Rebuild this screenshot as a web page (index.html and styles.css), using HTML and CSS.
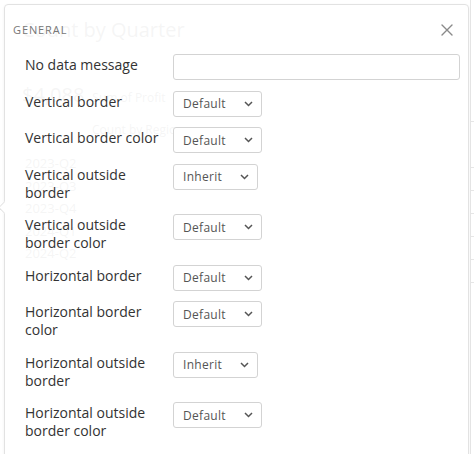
FILE: index.html
```html
<!DOCTYPE html>
<html lang="en">
<head>
<meta charset="utf-8">
<title>Table settings</title>
<link rel="stylesheet" href="styles.css">
</head>
<body>
<div class="dashboard">
  <section class="chart">
    <h2 class="chart-title">Count by Quarter</h2>
    <div class="kpi"><span class="kpi-value">$4,088</span><span class="kpi-label">Sum of Profit</span></div>
    <div class="kpi-sub">Count by Region</div>
    <ul class="quarters">
      <li>2023-Q2</li>
      <li>2023-Q3</li>
      <li>2023-Q4</li>
      <li>2024-Q1</li>
      <li>2024-Q2</li>
    </ul>
  </section>
  <aside class="table">
    <div class="table-head"></div>
    <div class="table-row tall"></div>
    <div class="table-row"></div>
    <div class="table-row"></div>
    <div class="table-row"></div>
    <div class="table-row"></div>
    <div class="table-row"></div>
    <div class="table-row last"></div>
  </aside>
</div>

<div class="popover">
  <header class="pop-head">
    <span class="pop-title">GENERAL</span>
    <button class="close" type="button" aria-label="Close">
      <svg width="12" height="12" viewBox="0 0 12 12"><path d="M1 1 L11 11 M11 1 L1 11" stroke="#8a8a8a" stroke-width="1.4" fill="none" stroke-linecap="round"/></svg>
    </button>
  </header>
  <div class="form">
    <span class="field-label">No data message</span>
    <input class="text-input" type="text">

    <span class="field-label">Vertical border</span>
    <div class="select"><span>Default</span><svg class="chev" width="9" height="6" viewBox="0 0 9 6"><path d="M1 1 L4.5 4.5 L8 1" stroke="#555" stroke-width="1.5" fill="none"/></svg></div>

    <span class="field-label">Vertical border color</span>
    <div class="select"><span>Default</span><svg class="chev" width="9" height="6" viewBox="0 0 9 6"><path d="M1 1 L4.5 4.5 L8 1" stroke="#555" stroke-width="1.5" fill="none"/></svg></div>

    <span class="field-label">Vertical outside border</span>
    <div class="select"><span>Inherit</span><svg class="chev" width="9" height="6" viewBox="0 0 9 6"><path d="M1 1 L4.5 4.5 L8 1" stroke="#555" stroke-width="1.5" fill="none"/></svg></div>

    <span class="field-label">Vertical outside border color</span>
    <div class="select"><span>Default</span><svg class="chev" width="9" height="6" viewBox="0 0 9 6"><path d="M1 1 L4.5 4.5 L8 1" stroke="#555" stroke-width="1.5" fill="none"/></svg></div>

    <span class="field-label">Horizontal border</span>
    <div class="select"><span>Default</span><svg class="chev" width="9" height="6" viewBox="0 0 9 6"><path d="M1 1 L4.5 4.5 L8 1" stroke="#555" stroke-width="1.5" fill="none"/></svg></div>

    <span class="field-label">Horizontal border color</span>
    <div class="select"><span>Default</span><svg class="chev" width="9" height="6" viewBox="0 0 9 6"><path d="M1 1 L4.5 4.5 L8 1" stroke="#555" stroke-width="1.5" fill="none"/></svg></div>

    <span class="field-label">Horizontal outside border</span>
    <div class="select"><span>Inherit</span><svg class="chev" width="9" height="6" viewBox="0 0 9 6"><path d="M1 1 L4.5 4.5 L8 1" stroke="#555" stroke-width="1.5" fill="none"/></svg></div>

    <span class="field-label">Horizontal outside border color</span>
    <div class="select"><span>Default</span><svg class="chev" width="9" height="6" viewBox="0 0 9 6"><path d="M1 1 L4.5 4.5 L8 1" stroke="#555" stroke-width="1.5" fill="none"/></svg></div>
  </div>
</div>
</body>
</html>
```

FILE: styles.css
```css
* { box-sizing: border-box; }

html, body {
  margin: 0;
  padding: 0;
  width: 474px;
  height: 454px;
  overflow: hidden;
  background: #ffffff;
  font-family: "Open Sans", "Noto Sans", sans-serif;
}

/* ghost dashboard behind the popover */
.dashboard {
  display: flex;
  height: 454px;
}

.chart {
  flex: 1;
  padding: 18px 0 0 22px;
  color: #8e8e8e;
}

.chart-title {
  margin: 0;
  font-size: 20px;
  line-height: 24px;
  font-weight: 400;
}

.kpi {
  display: flex;
  align-items: baseline;
  gap: 8px;
  margin-top: 40px;
}

.kpi-value {
  font-size: 20px;
  line-height: 26px;
}

.kpi-label {
  font-size: 12px;
}

.kpi-sub {
  margin: 14px 0 0 70px;
  font-size: 12px;
  line-height: 16px;
}

.quarters {
  list-style: none;
  margin: 14px 0 0 3px;
  padding: 0;
  font-size: 13px;
  line-height: 22.5px;
}

.table {
  width: 4px;
  border-left: 1px solid #e6e6e6;
}

.table-head {
  height: 121px;
}

.table-row {
  height: 23px;
  border-top: 1px solid #e6e6e6;
}

.table-row.tall {
  height: 46px;
}

/* popover */
.popover {
  position: absolute;
  left: 4px;
  top: 4px;
  width: 465px;
  height: 470px;
  background: rgba(255, 255, 255, 0.91);
  border: 1px solid #e2e2e2;
  border-radius: 4px;
  box-shadow: 0 1px 3px rgba(0, 0, 0, 0.06);
}

.popover::before {
  content: "";
  position: absolute;
  left: -5px;
  top: 198px;
  width: 8px;
  height: 8px;
  background: #ffffff;
  border-left: 1px solid #e2e2e2;
  border-bottom: 1px solid #e2e2e2;
  transform: rotate(45deg);
}

.pop-head {
  display: flex;
  align-items: center;
  justify-content: space-between;
  padding: 17.5px 15.5px 0 8px;
  height: 31.5px;
}

.pop-title {
  font-size: 11px;
  line-height: 14px;
  letter-spacing: 0.9px;
  color: #777777;
}

.close {
  display: flex;
  padding: 0;
  border: 0;
  background: none;
  cursor: pointer;
}

.form {
  display: grid;
  grid-template-columns: 140px 1fr;
  column-gap: 8px;
  row-gap: 10.5px;
  align-items: start;
  justify-items: start;
  padding: 17.5px 8px 0 20px;
}

.field-label {
  padding: 2px 0;
  font-size: 14px;
  line-height: 18px;
  color: #333333;
}

.text-input {
  justify-self: stretch;
  height: 26px;
  margin: 0;
  border: 1px solid #d3d3d3;
  border-radius: 3px;
  background: #ffffff;
  font: inherit;
}

.select {
  display: flex;
  align-items: center;
  gap: 18px;
  height: 26px;
  padding: 0 8px 0 9px;
  border: 1px solid #d3d3d3;
  border-radius: 3px;
  background: #ffffff;
  font-size: 12px;
  letter-spacing: 0.3px;
  color: #555555;
}

.chev {
  display: block;
}
```
